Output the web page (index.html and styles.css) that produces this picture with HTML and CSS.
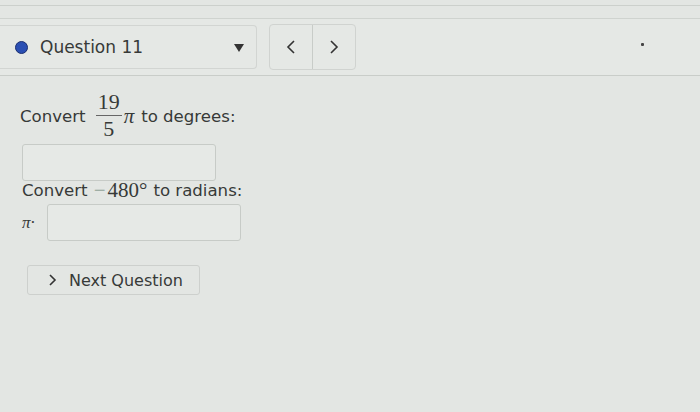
FILE: index.html
```html
<!DOCTYPE html>
<html>
<head>
<meta charset="utf-8">
<link rel="stylesheet" href="styles.css">
</head>
<body>
<div class="page">
  <div class="topline"></div>
  <div class="header">
    <div class="qselect">
      <span class="dot"></span>
      <span class="qtitle">Question 11</span>
      <svg class="caret" width="10" height="8" viewBox="0 0 10 8"><polygon points="0,0 10,0 5,8" fill="#333"/></svg>
    </div>
    <div class="nav">
      <div class="navbtn"><svg width="10" height="14" viewBox="0 0 10 14"><polyline points="8,1 2,7 8,13" fill="none" stroke="#333" stroke-width="1.6"/></svg></div>
      <div class="navbtn"><svg width="10" height="14" viewBox="0 0 10 14"><polyline points="2,1 8,7 2,13" fill="none" stroke="#333" stroke-width="1.6"/></svg></div>
    </div>
    <span class="speck"></span>
  </div>
  <div class="content">
    <div class="line1">
      <span>Convert</span>
      <span class="frac"><span class="num">19</span><span class="den">5</span></span>
      <span class="math pi">π</span>
      <span>to degrees:</span>
    </div>
    <div class="input in1"></div>
    <div class="line2">
      <span>Convert</span>
      <span class="math"><span class="minus">−</span>480°</span>
      <span>to radians:</span>
    </div>
    <div class="line3">
      <span class="math pidot">π·</span>
      <div class="input in2"></div>
    </div>
    <div class="next">
      <svg width="9" height="12" viewBox="0 0 9 12"><polyline points="2,1 7,6 2,11" fill="none" stroke="#333" stroke-width="1.6"/></svg>
      <span>Next Question</span>
    </div>
  </div>
</div>
</body>
</html>
```

FILE: styles.css
```css
html, body {
  margin: 0;
  padding: 0;
  background: #e3e6e3;
}
.page {
  width: 700px;
  height: 412px;
  font-family: "DejaVu Sans", Verdana, sans-serif;
  color: #333;
  overflow: hidden;
}
.topline {
  height: 5px;
  border-bottom: 1px solid #ccd0cc;
  margin-bottom: 12px;
}
.header {
  height: 56px;
  border-top: 1px solid #cfd3cf;
  border-bottom: 1px solid #c9cdc9;
  display: flex;
  align-items: center;
  position: relative;
  background: #e5e8e5;
}
.qselect {
  width: 257px;
  height: 44px;
  box-sizing: border-box;
  border: 1px solid #d2d5d2;
  border-left: none;
  border-radius: 0 4px 4px 0;
  display: flex;
  align-items: center;
  padding-left: 15px;
  padding-right: 12px;
}
.dot {
  width: 13px;
  height: 13px;
  border-radius: 50%;
  background: #2a4fb3;
  border: 1px solid #1b2f70;
  box-sizing: border-box;
  margin-right: 12px;
}
.qtitle {
  font-size: 17px;
  flex: 1;
  color: #373a38;
}
.caret { margin-top: 2px; }
.nav {
  margin-left: 12px;
  display: flex;
  height: 44px;
  border: 1px solid #d0d3d0;
  border-radius: 4px;
}
.navbtn {
  width: 42px;
  display: flex;
  align-items: center;
  justify-content: center;
}
.navbtn + .navbtn { border-left: 1px solid #c8ccc8; }
.speck {
  position: absolute;
  left: 641px;
  top: 24px;
  width: 3px;
  height: 3px;
  background: #444;
  border-radius: 1px;
}
.content {
  padding-left: 20px;
  font-size: 16.6px;
  color: #373a38;
}
.line1 {
  display: flex;
  align-items: center;
  margin-top: 12px;
  height: 56px;
}
.math {
  font-family: "Liberation Serif", "DejaVu Serif", serif;
  font-size: 21px;
}
.minus { color: #8fa096; margin-right: 2px; }
.frac {
  display: inline-flex;
  flex-direction: column;
  align-items: center;
  font-family: "Liberation Serif", "DejaVu Serif", serif;
  font-size: 22px;
  margin: 0 2px 0 10px;
}
.num {
  padding: 0 2px 2px;
  border-bottom: 1px solid #666;
  line-height: 22px;
}
.den { line-height: 26px; }
.pi { margin-right: 7px; font-style: italic; }
.input {
  height: 37px;
  box-sizing: border-box;
  border: 1px solid #c7cbc7;
  border-radius: 3px;
  background: #e6e9e6;
}
.in1 {
  width: 194px;
  margin-left: 2px;
}
.line2 {
  height: 18px;
  display: flex;
  align-items: center;
  gap: 6px;
  margin-left: 2px;
}
.line3 {
  display: flex;
  align-items: center;
  margin-top: 5px;
  margin-left: 2px;
}
.pidot {
  font-size: 17px;
  width: 25px;
  font-style: italic;
}
.in2 { width: 194px; }
.next {
  margin-top: 24px;
  margin-left: 7px;
  width: 173px;
  height: 30px;
  box-sizing: border-box;
  border: 1px solid #cdd0cd;
  border-radius: 3px;
  display: flex;
  align-items: center;
  padding-left: 20px;
  gap: 12px;
  font-size: 16px;
  color: #373a38;
}
```
